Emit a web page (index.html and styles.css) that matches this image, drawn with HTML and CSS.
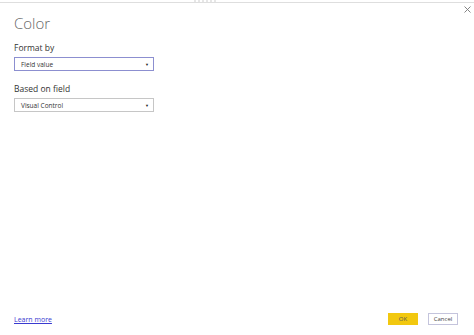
FILE: index.html
```html
<!DOCTYPE html>
<html lang="en">
<head>
  <meta charset="UTF-8">
  <title>Color</title>
  <link rel="stylesheet" href="styles.css">
</head>
<body>
  <div class="dialog">
    <div class="top-bar">
      <div class="grip"></div>
    </div>
    <button class="close" aria-label="Close">
      <svg width="7" height="7" viewBox="0 0 7 7"><path d="M0.5 0.5L6.5 6.5M6.5 0.5L0.5 6.5" stroke="#777" stroke-width="0.9"/></svg>
    </button>

    <div class="content">
      <h1 class="title">Color</h1>

      <label class="field-label">Format by</label>
      <div class="select focused">
        <span>Field value</span>
        <span class="arrow">&#9660;</span>
      </div>

      <label class="field-label">Based on field</label>
      <div class="select">
        <span>Visual Control</span>
        <span class="arrow">&#9660;</span>
      </div>
    </div>

    <div class="footer">
      <a href="#" class="learn">Learn more</a>
      <div class="buttons">
        <button class="btn ok">OK</button>
        <button class="btn cancel">Cancel</button>
      </div>
    </div>
  </div>
</body>
</html>
```

FILE: styles.css
```css
html, body {
  margin: 0;
  padding: 0;
  background: #fff;
  font-family: "Open Sans", "Segoe UI", sans-serif;
}
.dialog {
  width: 474px;
  height: 335px;
  position: relative;
  display: flex;
  flex-direction: column;
  box-sizing: border-box;
}
.top-bar {
  height: 2px;
  border-bottom: 1px solid #dedede;
  position: relative;
}
.grip {
  position: absolute;
  left: 194px;
  top: 0;
  width: 22px;
  height: 2px;
  border-top: 2px dotted #e6e6e6;
}
.close {
  position: absolute;
  right: 2px;
  top: 5px;
  width: 9px;
  height: 9px;
  padding: 1px;
  border: none;
  background: none;
  line-height: 0;
}
.content {
  flex: 1;
  padding: 0 14px;
}
.title {
  margin: 10px 0 0;
  font-size: 15px;
  font-weight: 300;
  color: #666;
  line-height: 20px;
}
.field-label {
  display: block;
  margin-top: 9px;
  font-size: 8.5px;
  color: #333;
  line-height: 13px;
}
.title + .field-label {
  margin-top: 8px;
}
.select {
  width: 140px;
  height: 14px;
  box-sizing: border-box;
  border: 1px solid #c6c6c6;
  margin-top: 3px;
  margin-bottom: 11px;
  display: flex;
  align-items: center;
  justify-content: space-between;
  padding: 0 4px 0 6px;
  font-size: 6.5px;
  color: #333;
}
.select.focused {
  border-color: #8c8fd0;
}
.arrow {
  font-size: 4px;
  color: #222;
}
.footer {
  display: flex;
  justify-content: space-between;
  align-items: center;
  padding: 0 16px 10px 14px;
}
.learn {
  font-size: 7px;
  color: #3a3ad0;
  text-decoration: underline;
}
.buttons {
  display: flex;
  gap: 10px;
}
.btn {
  width: 30px;
  height: 12px;
  font-family: inherit;
  font-size: 6px;
  padding: 0;
  border: 1px solid #c4c4dc;
  background: #fff;
  color: #444;
}
.btn.ok {
  background: #f2c80f;
  border-color: #f2c80f;
  color: #555;
}
```
